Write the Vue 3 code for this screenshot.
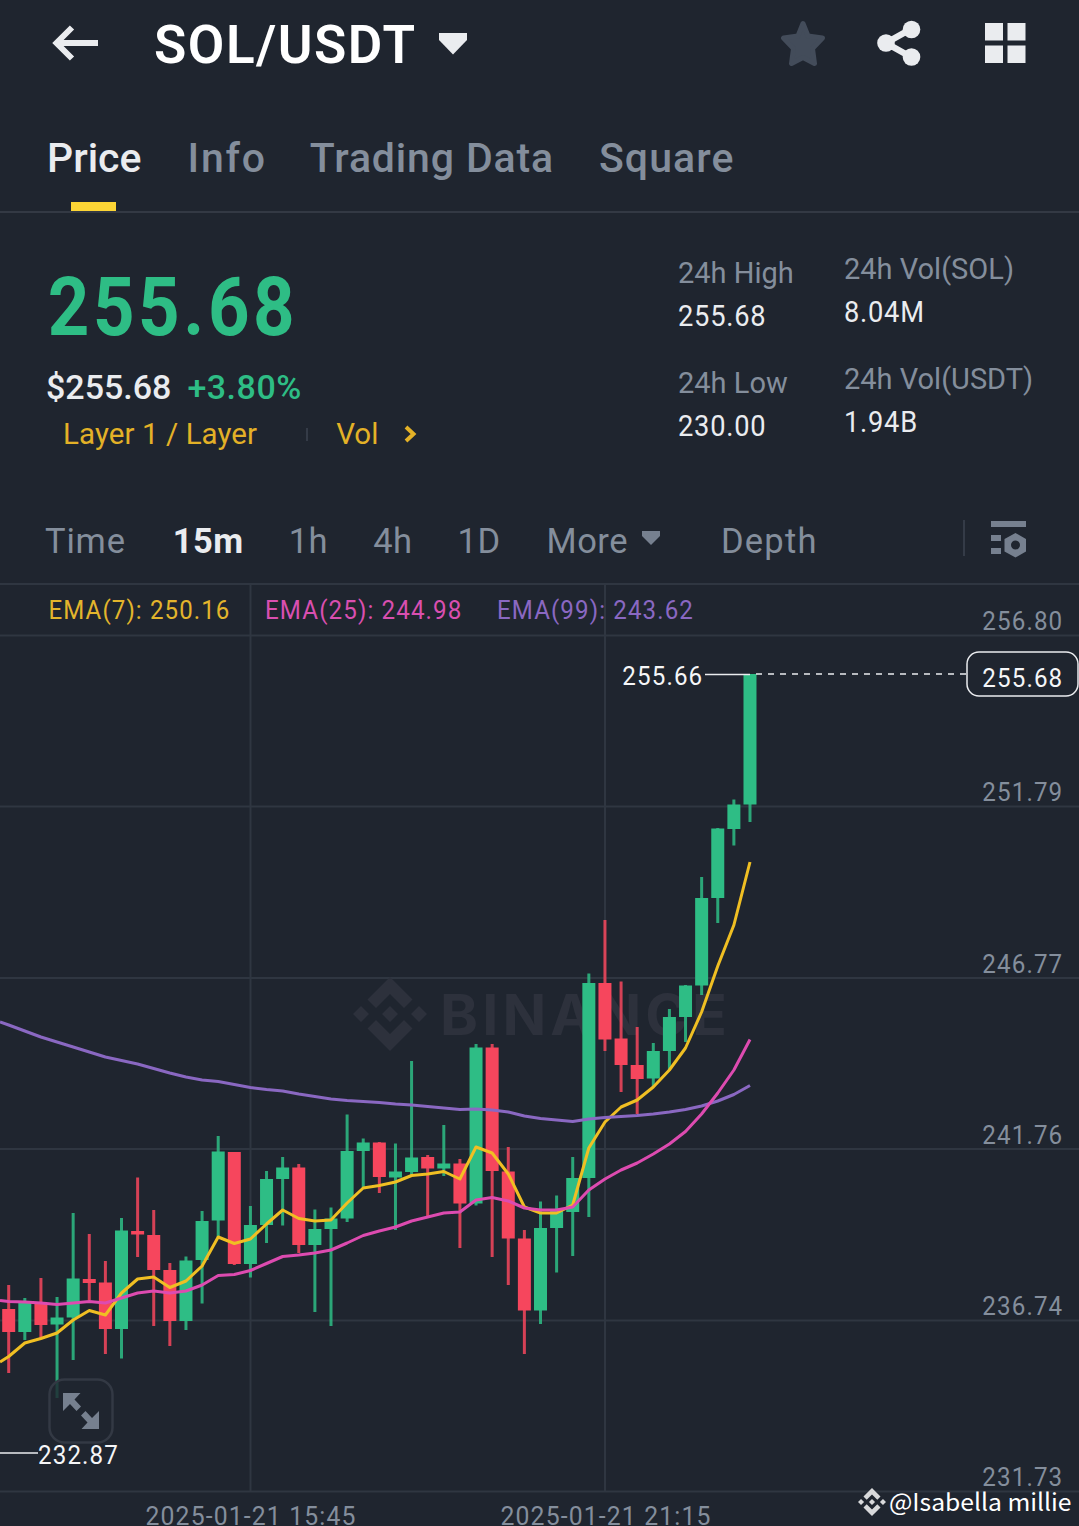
<script setup>
import { ref, computed } from 'vue'

const tabs = ref([
  { id: 'price', name: 'Price' },
  { id: 'info', name: 'Info' },
  { id: 'trading', name: 'Trading Data' },
  { id: 'square', name: 'Square' }
])
const activeTab = ref('price')

const stats = ref([
  [
    { label: '24h High', value: '255.68' },
    { label: '24h Low', value: '230.00' }
  ],
  [
    { label: '24h Vol(SOL)', value: '8.04M' },
    { label: '24h Vol(USDT)', value: '1.94B' }
  ]
])

const intervals = ref([
  { id: 'time', name: 'Time' },
  { id: 'm15', name: '15m' },
  { id: 'h1', name: '1h' },
  { id: 'h4', name: '4h' },
  { id: 'd1', name: '1D' },
  { id: 'more', name: 'More' },
  { id: 'depth', name: 'Depth' }
])
const activeInterval = ref('m15')

// Price axis
const gridLines = [
  { y: 635.5, price: '256.80' },
  { y: 806.5, price: '251.79' },
  { y: 978, price: '246.77' },
  { y: 1149, price: '241.76' },
  { y: 1320.5, price: '236.74' },
  { y: 1491.5, price: '231.73' }
]

const emaLabels = [
  { id: 7, text: 'EMA(7): 250.16', x: 48.5, width: 182 },
  { id: 25, text: 'EMA(25): 244.98', x: 265, width: 197.5 },
  { id: 99, text: 'EMA(99): 243.62', x: 497, width: 197 }
]

// [up, high, bodyTop, bodyBottom, low]
const candles = [
  [0, 1285, 1309, 1332, 1373], [1, 1298, 1303, 1332, 1340],
  [0, 1278, 1303, 1325, 1338], [1, 1297, 1317.5, 1324.5, 1398],
  [1, 1213, 1278.5, 1317.5, 1360], [0, 1234, 1279, 1283, 1300],
  [0, 1261, 1282.5, 1329, 1354], [1, 1218, 1230.5, 1329, 1358.5],
  [0, 1177.5, 1231, 1234.5, 1257], [0, 1210, 1235, 1270, 1326],
  [0, 1263, 1270, 1321, 1346], [1, 1256.5, 1260.5, 1321, 1330],
  [1, 1211, 1221, 1260, 1303.5], [1, 1136, 1151.5, 1220.5, 1237],
  [0, 1152, 1152, 1264, 1265], [1, 1206, 1225, 1264, 1277.5],
  [1, 1171, 1179, 1225, 1243], [1, 1157, 1167.5, 1179, 1225.5],
  [0, 1164, 1167.5, 1245, 1253], [1, 1209.5, 1229, 1245, 1312],
  [1, 1207.5, 1218.5, 1229, 1326], [1, 1114.5, 1151, 1218.5, 1222],
  [1, 1138.5, 1142.5, 1151, 1188], [0, 1142, 1142.5, 1177, 1193],
  [1, 1143.5, 1171.5, 1177.5, 1230], [1, 1061, 1157.5, 1172, 1175],
  [0, 1155, 1157, 1168.5, 1216], [1, 1125, 1163.5, 1168.5, 1176],
  [0, 1159, 1163.5, 1203.5, 1248], [1, 1044, 1047.5, 1203.5, 1205.5],
  [0, 1044, 1047.5, 1171, 1257], [0, 1147, 1171.5, 1238.5, 1285],
  [0, 1230, 1238.5, 1310.5, 1354], [1, 1201.5, 1228, 1310.5, 1324],
  [1, 1195.5, 1211, 1228, 1272.5], [1, 1157, 1178, 1212, 1256],
  [1, 973.5, 983, 1178, 1217], [0, 920, 983, 1039.5, 1051],
  [0, 981.5, 1038.5, 1065, 1092], [0, 1027, 1065, 1079, 1114],
  [1, 1043, 1051, 1078.5, 1087], [1, 1009, 1017, 1051, 1070],
  [1, 985, 985.5, 1017, 1042], [1, 877, 898, 985.5, 995],
  [1, 828, 828.5, 898, 923], [1, 799.5, 804.5, 829, 845.5],
  [1, 674, 674, 804.5, 822]
]

const candleX = (i) => 8.7 + i * 16.115

const ema7 = [
  1356.5, 1343, 1338.5, 1333, 1320, 1310.5, 1315, 1293, 1279, 1277, 1287.5, 1281,
  1266, 1237, 1243.5, 1239, 1224, 1210, 1218.5, 1221, 1220, 1203, 1188, 1185.5,
  1182, 1175.5, 1174, 1171.5, 1179, 1147, 1153, 1174, 1207, 1213, 1213, 1205,
  1148, 1122, 1107, 1100, 1087, 1070, 1048, 1012, 966, 925, 862
]
const ema25 = [
  1301.5, 1302, 1303, 1304.5, 1303, 1301.5, 1303, 1298, 1293, 1291, 1293, 1291,
  1285, 1275.5, 1274.5, 1270.5, 1263.5, 1256.5, 1255, 1253, 1250, 1243, 1235.5, 1231,
  1227, 1221, 1217, 1213, 1212, 1200, 1197.5, 1201, 1208, 1210, 1210, 1207,
  1190, 1179, 1170, 1163, 1154, 1144, 1131.5, 1114, 1093, 1070, 1039.5
]
const ema99 = [
  1025, 1031, 1037, 1042, 1047, 1052, 1057, 1060.5, 1064, 1068.5, 1073, 1077,
  1080, 1081.5, 1084.5, 1087.5, 1089.5, 1091, 1094, 1096.5, 1099, 1100.5, 1101.5, 1102.5,
  1104, 1105, 1106.5, 1108, 1109.5, 1109, 1110, 1112, 1116, 1118.5, 1120, 1121.5,
  1119, 1117.5, 1116.5, 1115.5, 1114, 1112, 1109.5, 1106, 1101, 1094.5, 1085.5
]

const toPoints = (values, startY) =>
  `0,${startY} ` + values.map((y, i) => `${candleX(i).toFixed(1)},${y}`).join(' ')

const emaLines = computed(() => [
  { id: 7, points: toPoints(ema7, 1362) },
  { id: 99, points: toPoints(ema99, 1022) },
  { id: 25, points: toPoints(ema25, 1300.5) }
])
</script>

<template>
  <div class="app">
    <header class="header">
      <svg class="back" width="48" height="40" viewBox="0 0 48 40">
        <path d="M20 4.5 4.5 20 20 35.5M4.5 20H46" fill="none" stroke="currentColor" stroke-width="6" />
      </svg>
      <h1 class="pair">SOL/USDT</h1>
      <svg class="pair-caret" width="28" height="22" viewBox="0 0 28 22">
        <path d="M0 0h28v7L14 21.5 0 7z" fill="currentColor" />
      </svg>
      <div class="actions">
        <svg class="star" width="46" height="48" viewBox="0 0 46 48">
          <path d="M23 4.5 28 17 42.5 19 32.5 29.500 34.500 44.500 23 38.500 11.500 44.500 13.500 29.500 3.500 19 18 17z"
            fill="currentColor" stroke="currentColor" stroke-width="5" stroke-linejoin="round" />
        </svg>
        <svg width="44" height="48" viewBox="0 0 44 48">
          <path d="M34 10 9 24 34 38" fill="none" stroke="currentColor" stroke-width="6.5" />
          <circle cx="34.500" cy="10.500" r="8.8" fill="currentColor" />
          <circle cx="9" cy="24" r="8.8" fill="currentColor" />
          <circle cx="34.500" cy="38" r="8.8" fill="currentColor" />
        </svg>
        <svg width="41" height="48" viewBox="0 0 41 48">
          <path d="M0 4h18v17.500H0zM22.500 4h18v17.500h-18zM0 26.500h18V44H0zM22.500 26.500h18V44h-18z" fill="currentColor" />
        </svg>
      </div>
    </header>

    <nav class="tabs">
      <a v-for="tab in tabs" :key="tab.id" class="tab" :class="[tab.id, { active: tab.id === activeTab }]"
        @click="activeTab = tab.id">{{ tab.name }}</a>
    </nav>

    <section class="summary">
      <div class="price-block">
        <div class="last-price">255.68</div>
        <div class="fiat">
          <span class="fiat-price">$255.68</span>
          <span class="change">+3.80%</span>
        </div>
        <div class="tags">
          <span class="tag-layer">Layer 1 / Layer</span>
          <i class="tag-sep"></i>
          <span class="tag-vol">Vol</span>
          <svg width="13" height="18" viewBox="0 0 13 18">
            <path d="M2 2l7.500 7L2 16" fill="none" stroke="currentColor" stroke-width="4" />
          </svg>
        </div>
      </div>
      <div v-for="(column, i) in stats" :key="i" class="stats">
        <div v-for="item in column" :key="item.label" class="stat">
          <div class="stat-label">{{ item.label }}</div>
          <div class="stat-value">{{ item.value }}</div>
        </div>
      </div>
    </section>

    <nav class="intervals">
      <a v-for="item in intervals" :key="item.id" class="interval"
        :class="[item.id, { active: item.id === activeInterval }]" @click="activeInterval = item.id">
        {{ item.name }}
        <svg v-if="item.id === 'more'" class="more-caret" width="18" height="14" viewBox="0 0 18 14">
          <path d="M0 0h18v5L9 14 0 5z" fill="currentColor" />
        </svg>
      </a>
      <div class="settings">
        <svg width="36" height="38" viewBox="0 0 36 38">
          <path d="M0 1h35v6H0zM0 15h10v6H0zM0 28h10v6H0z" fill="currentColor" />
          <path fill-rule="evenodd" d="M24.500 13 35 19v12.500L24.500 37.500 13.500 31.500V19zM24.500 20.500a4.500 4.500 0 1 0 0 9 4.500 4.500 0 0 0 0-9z"
            fill="currentColor" />
        </svg>
      </div>
    </nav>

    <svg class="chart" width="1079" height="943" viewBox="0 583 1079 943">
      <defs>
        <symbol id="logo" viewBox="0 0 74 74">
          <path d="M37 0 59.500 22.500 51 31 37 17 23 31 14.500 22.500zM37 74 59.500 51.500 51 43 37 57 23 43 14.500 51.500zM8 29l8 8-8 8-8-8zM66 29l8 8-8 8-8-8zM37 29l8 8-8 8-8-8z" />
        </symbol>
      </defs>

      <!-- grid -->
      <g class="grid">
        <path d="M0 584H1079" />
        <path v-for="line in gridLines" :key="line.y" :d="`M0 ${line.y}H1079`" />
        <path d="M250.500 585V1491M605 585V1491" />
      </g>

      <!-- watermark -->
      <g class="watermark">
        <use href="#logo" x="353" y="977" width="74" height="74" />
        <text x="440" y="1034.500" textLength="291" lengthAdjust="spacingAndGlyphs">BINANCE</text>
      </g>

      <!-- candles -->
      <g v-for="(c, i) in candles" :key="i" :class="c[0] ? 'up' : 'down'">
        <rect class="wick" :x="candleX(i) - 1.5" :y="c[1]" width="3" :height="c[4] - c[1]" />
        <rect :x="candleX(i) - 6.5" :y="c[2]" width="13" :height="c[3] - c[2]" />
      </g>

      <polyline v-for="line in emaLines" :key="line.id" :class="['ema-line', 'ema' + line.id]" :points="line.points" />

      <g class="labels">
        <text v-for="ema in emaLabels" :key="ema.id" :class="'ema-text' + ema.id" :x="ema.x" y="619"
          :textLength="ema.width" lengthAdjust="spacingAndGlyphs">{{ ema.text }}</text>
        <text v-for="line in gridLines" :key="line.price" x="982.3" :y="line.y - 5.5" textLength="81"
          lengthAdjust="spacingAndGlyphs">{{ line.price }}</text>
        <text x="145.500" y="1525" textLength="211" lengthAdjust="spacingAndGlyphs">2025-01-21 15:45</text>
        <text x="500.500" y="1525" textLength="211" lengthAdjust="spacingAndGlyphs">2025-01-21 21:15</text>
      </g>

      <!-- high, low and last price markers -->
      <g class="marker">
        <path d="M705 674.500H750M0 1453H38" />
        <path d="M756 674H967" stroke-dasharray="6 6" />
        <rect x="967" y="652" width="111" height="44" rx="12" />
        <text x="622.3" y="685" textLength="81" lengthAdjust="spacingAndGlyphs">255.66</text>
        <text x="982.3" y="686.500" textLength="81" lengthAdjust="spacingAndGlyphs">255.68</text>
        <text x="38" y="1463.500" textLength="81" lengthAdjust="spacingAndGlyphs">232.87</text>
      </g>

      <!-- fullscreen button -->
      <g class="expand">
        <rect x="49.500" y="1379.500" width="63" height="63" rx="15" />
        <path d="M63 1393H80.500L74.500 1399.500 81 1406.500 76.500 1411 70 1404 63 1411zM99 1429H81.500L87.500 1422.500 81 1415.500 85.500 1411 92 1418 99 1411z" />
      </g>

      <g class="author">
        <use href="#logo" x="858" y="1488" width="28" height="28" />
        <text x="889" y="1510.500" textLength="182.500" lengthAdjust="spacingAndGlyphs">@Isabella millie</text>
      </g>
    </svg>
  </div>
</template>

<style>
body {
  background: #1f252f;
}
</style>

<style scoped>
.app {
  width: 1079px;
  height: 1526px;
  overflow: hidden;
  background: #1f252f;
  color: #eaecef;
  font-family: Roboto, "Liberation Sans", sans-serif;
  white-space: nowrap;
}

svg {
  display: block;
  flex: none;
}

.header {
  display: flex;
  align-items: flex-start;
  height: 88px;
  padding: 0 53px 0 52px;
  box-sizing: border-box;
}

.back {
  margin-top: 23px;
}

.pair {
  width: 261px;
  margin: 15px 0 0 54px;
  font-size: 53px;
  line-height: 60px;
  font-weight: 600;
  color: #fff;
  letter-spacing: 1.5px;
}

.pair-caret {
  margin: 33px 0 0 24px;
}

.actions {
  display: flex;
  margin: 19px 0 0 auto;
  gap: 64px;
}

.star {
  color: #434c5a;
  margin-right: -13px;
}

.tabs {
  display: flex;
  gap: 46px;
  height: 125px;
  padding: 40px 0 0 47px;
  box-sizing: border-box;
  border-bottom: 2px solid #333944;
  font-size: 41px;
  line-height: 60px;
  font-weight: 500;
  color: #848e9c;
}

.tab {
  display: flex;
  flex-direction: column;
  align-items: center;
}

.tab.active {
  color: #eaecef;
}

.tab.active::after {
  content: "";
  width: 45px;
  height: 9px;
  margin: 14px 2px 0 0;
  background: #fcd535;
}

.info {
  letter-spacing: 1.8px;
  margin-right: -3px;
}

.trading {
  letter-spacing: 0.85px;
  margin-right: -1px;
}

.square {
  letter-spacing: 1.1px;
}

.summary {
  display: flex;
  height: 282px;
  box-sizing: border-box;
  padding: 38px 0 0 46px;
}

.price-block {
  width: 632px;
  padding-top: 11px;
}

.last-price {
  padding-left: 2px;
  font-size: 82px;
  line-height: 90px;
  font-weight: 700;
  letter-spacing: 4px;
  color: #2ebd85;
  transform: scaleX(0.885);
  transform-origin: left;
}

.fiat {
  display: flex;
  gap: 16px;
  margin-top: 11px;
  font-size: 34px;
  line-height: 48px;
  font-weight: 500;
}

.change {
  letter-spacing: 0.5px;
  color: #2ebd85;
}

.tags {
  display: flex;
  align-items: center;
  margin-top: 3px;
  padding-left: 17px;
  font-size: 29.5px;
  line-height: 40px;
  letter-spacing: 0.08px;
  color: #e3b127;
}

.tag-sep {
  width: 2px;
  height: 13px;
  margin: 0 28px 0 49px;
  background: #343b47;
}

.tag-vol {
  margin-right: 25px;
}

.stats {
  width: 166px;
  margin-top: 1px;
}

.stats + .stats {
  margin-top: -3px;
}

.stat {
  font-size: 29px;
  line-height: 43px;
  margin-bottom: 24px;
}

.stat-label {
  color: #848e9c;
}

.stat-value {
  letter-spacing: 0.8px;
  transform: scaleX(0.94);
  transform-origin: left;
}

.intervals {
  display: flex;
  height: 88px;
  padding-left: 45px;
  font-size: 34.5px;
  line-height: 92px;
  letter-spacing: 0.5px;
  color: #848e9c;
}

.interval {
  display: flex;
  margin-right: 45px;
}

.interval.active {
  font-weight: 700;
  color: #eaecef;
}

.interval.time {
  letter-spacing: 0.8px;
  margin-right: 47px;
}

.interval.d1 {
  margin-right: 46px;
}

.interval.more {
  margin-right: 61px;
}

.interval.depth {
  letter-spacing: 1.2px;
}

.more-caret {
  margin: 36px 0 0 14px;
  color: #76808f;
}

.settings {
  margin-left: auto;
  margin-top: 25px;
  margin-right: 52px;
  height: 36px;
  padding-left: 26px;
  border-left: 2px solid #343b47;
  color: #76808f;
}

.grid path {
  fill: none;
  stroke: #2f3641;
  stroke-width: 2;
}

.watermark {
  fill: #2d313c;
}

.watermark text {
  font-family: Inter, sans-serif;
  font-size: 56px;
  font-weight: 700;
  letter-spacing: 4px;
}

.up {
  fill: #2ebd85;
}

.down {
  fill: #f6465d;
}

.wick {
  opacity: 0.85;
}

.ema-line {
  fill: none;
  stroke-width: 3;
  stroke-linejoin: round;
}

.ema7 {
  stroke: #f0bf23;
}

.ema25 {
  stroke: #dd4bb0;
}

.ema99 {
  stroke: #8a68c2;
}

.labels text,
.marker text {
  font-size: 26px;
  letter-spacing: 1.2px;
  fill: #848e9c;
}

.labels .ema-text7 {
  fill: #e3b52c;
}

.labels .ema-text25 {
  fill: #d94fb0;
}

.labels .ema-text99 {
  fill: #8a68c2;
}

.marker path,
.marker rect {
  fill: none;
  stroke: #eaecef;
  stroke-width: 1.5;
}

.marker rect {
  fill: #1f252f;
}

.marker text {
  fill: #f5f6f8;
}

.expand rect {
  fill: #1f252f;
  fill-opacity: 0.8;
  stroke: #333944;
  stroke-width: 2.5;
}

.expand path {
  fill: #76808f;
}

.author {
  fill: #d8d9db;
}

.author text {
  font-family: "Noto Sans CJK SC", sans-serif;
  font-size: 24px;
  font-weight: 400;
  fill: #fff;
}
</style>
